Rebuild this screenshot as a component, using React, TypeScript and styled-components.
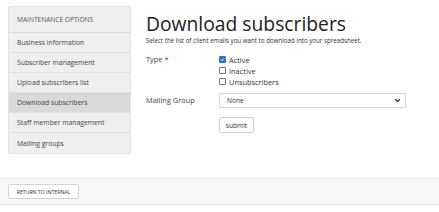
import React from "react";
import styled, { createGlobalStyle } from "styled-components";

const GlobalStyle = createGlobalStyle`
  html, body {
    margin: 0;
    padding: 0;
    background: #ffffff;
  }
  body {
    font-family: "Open Sans", "Liberation Sans", sans-serif;
    color: #333333;
  }
`;

const Page = styled.div`
  width: 439px;
  height: 212px;
  display: flex;
  flex-direction: column;
  overflow: hidden;
`;

const Main = styled.div`
  display: flex;
  gap: 15px;
  padding: 6px 0 0 8px;
  height: 172px;
  box-sizing: border-box;
`;

const Sidebar = styled.div`
  width: 123px;
  align-self: flex-start;
  background: #efefef;
  border: 1px solid #e3e3e3;
  border-radius: 2px;
  box-sizing: border-box;
`;

const SidebarHeader = styled.div`
  height: 26px;
  display: flex;
  align-items: center;
  padding-left: 8px;
  font-size: 6.6px;
  color: #555;
  border-bottom: 1px solid #dcdcdc;
  box-sizing: border-box;
`;

const SidebarItem = styled.div<{ $active?: boolean }>`
  height: 20px;
  display: flex;
  align-items: center;
  padding-left: 8px;
  font-size: 6.8px;
  color: #444;
  background: ${(p) => (p.$active ? "#d9d9d9" : "transparent")};
  border-bottom: 1px solid #e0e0e0;
  box-sizing: border-box;
  &:last-child {
    border-bottom: none;
  }
`;

const Content = styled.div`
  display: flex;
  flex-direction: column;
  padding-top: 6px;
`;

const Title = styled.h1`
  margin: 0;
  font-size: 19.3px;
  font-weight: 400;
  color: #222;
  line-height: 24px;
`;

const Description = styled.p`
  margin: 0 0 8px;
  font-size: 6.2px;
  color: #333;
  line-height: 10px;
`;

const FormRow = styled.div<{ $gap?: number }>`
  display: grid;
  grid-template-columns: 73px 1fr;
  align-items: start;
  margin-bottom: ${(p) => p.$gap ?? 6}px;
`;

const Label = styled.div<{ $top?: number }>`
  font-size: 7.4px;
  color: #444;
  line-height: 11px;
  padding-top: ${(p) => p.$top ?? 0}px;
`;

const Required = styled.span`
  color: #d0021b;
`;

const CheckList = styled.div`
  display: flex;
  flex-direction: column;
`;

const CheckLabel = styled.label`
  display: flex;
  align-items: center;
  gap: 3px;
  height: 11px;
  font-size: 7.4px;
  color: #333;
`;

const Box = styled.span<{ $checked?: boolean }>`
  width: 7px;
  height: 7px;
  border-radius: 1px;
  box-sizing: border-box;
  border: 1px solid ${(p) => (p.$checked ? "#2d6fd6" : "#777")};
  background: ${(p) => (p.$checked ? "#2d6fd6" : "#fff")};
  display: flex;
  align-items: center;
  justify-content: center;
`;

const Select = styled.div`
  width: 187px;
  height: 15px;
  border: 1px solid #d8d8d8;
  box-sizing: border-box;
  display: flex;
  align-items: center;
  justify-content: space-between;
  padding: 0 4px 0 7px;
  font-size: 6.6px;
  color: #333;
  background: #fff;
`;

const SubmitButton = styled.button`
  width: 35px;
  height: 16px;
  border: 1px solid #cfcfcf;
  border-radius: 2px;
  background: #fff;
  font-family: "Open Sans", "Liberation Sans", sans-serif;
  font-size: 6.6px;
  color: #333;
  padding: 0;
`;

const Footer = styled.div`
  height: 27px;
  background: #f7f7f7;
  border-top: 1px solid #e6e6e6;
  border-bottom: 1px solid #e6e6e6;
  display: flex;
  align-items: center;
  padding-left: 8px;
  box-sizing: border-box;
  margin-top: 6px;
`;

const ReturnButton = styled.button`
  height: 15px;
  width: 71px;
  border: 1px solid #d4d4d4;
  border-radius: 2px;
  background: #fff;
  font-family: "Open Sans", "Liberation Sans", sans-serif;
  font-size: 5.2px;
  color: #333;
  padding: 0;
`;

const menu = [
  "Business information",
  "Subscriber management",
  "Upload subscribers list",
  "Download subscribers",
  "Staff member management",
  "Mailing groups",
];

const checks = [
  { label: "Active", checked: true },
  { label: "Inactive", checked: false },
  { label: "Unsubscribers", checked: false },
];

export default function App() {
  return (
    <Page>
      <GlobalStyle />
      <Main>
        <Sidebar>
          <SidebarHeader>MAINTENANCE OPTIONS</SidebarHeader>
          {menu.map((m) => (
            <SidebarItem key={m} $active={m === "Download subscribers"}>
              {m}
            </SidebarItem>
          ))}
        </Sidebar>
        <Content>
          <Title>Download subscribers</Title>
          <Description>
            Select the list of client emails you want to download into your spreadsheet.
          </Description>
          <FormRow>
            <Label>
              Type <Required>*</Required>
            </Label>
            <CheckList>
              {checks.map((c) => (
                <CheckLabel key={c.label}>
                  <Box $checked={c.checked}>
                    {c.checked && (
                      <svg width="5" height="5" viewBox="0 0 10 10">
                        <path d="M2 5.2 L4.2 7.4 L8.2 2.6" stroke="#fff" strokeWidth="1.8" fill="none" />
                      </svg>
                    )}
                  </Box>
                  {c.label}
                </CheckLabel>
              ))}
            </CheckList>
          </FormRow>
          <FormRow $gap={9}>
            <Label $top={2}>Mailing Group</Label>
            <Select>
              None
              <svg width="7" height="5" viewBox="0 0 10 7">
                <path d="M1.5 1.5 L5 5 L8.5 1.5" stroke="#333" strokeWidth="1.8" fill="none" />
              </svg>
            </Select>
          </FormRow>
          <FormRow>
            <span />
            <SubmitButton>submit</SubmitButton>
          </FormRow>
        </Content>
      </Main>
      <Footer>
        <ReturnButton>RETURN TO INTERNAL</ReturnButton>
      </Footer>
    </Page>
  );
}
